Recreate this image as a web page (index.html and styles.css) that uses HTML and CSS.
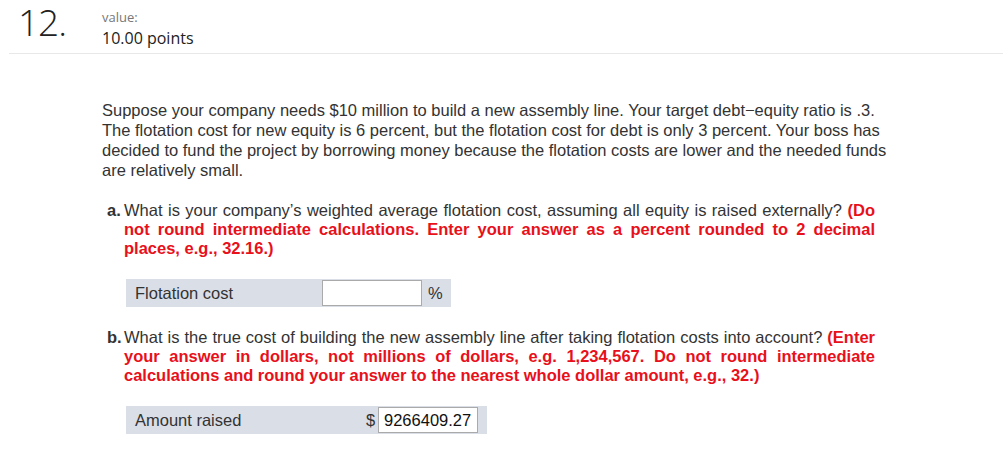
FILE: index.html
```html
<!DOCTYPE html>
<html>
<head>
<meta charset="utf-8">
<link rel="stylesheet" href="styles.css">
</head>
<body>
<div class="header">
  <div class="qnum">12.</div>
  <div class="value">
    <div class="value-label">value:</div>
    <div class="value-points">10.00 points</div>
  </div>
</div>
<div class="content">
  <p class="intro">Suppose your company needs $10 million to build a new assembly line. Your target debt−equity ratio is .3. The flotation cost for new equity is 6 percent, but the flotation cost for debt is only 3 percent. Your boss has decided to fund the project by borrowing money because the flotation costs are lower and the needed funds are relatively small.</p>

  <div class="part part-a">
    <div class="part-label">a.</div>
    <div class="part-text">What is your company’s weighted average flotation cost, assuming all equity is raised externally? <span class="red">(Do not round intermediate calculations. Enter your answer as a percent rounded to 2 decimal places, e.g., 32.16.)</span></div>
  </div>
  <div class="answer answer-a">
    <div class="answer-label">Flotation cost</div>
    <div class="answer-input"></div>
    <div class="answer-unit">%</div>
  </div>

  <div class="part part-b">
    <div class="part-label">b.</div>
    <div class="part-text">What is the true cost of building the new assembly line after taking flotation costs into account? <span class="red">(Enter your answer in dollars, not millions of dollars, e.g. 1,234,567. Do not round intermediate calculations and round your answer to the nearest whole dollar amount, e.g., 32.)</span></div>
  </div>
  <div class="answer answer-b">
    <div class="answer-label">Amount raised</div>
    <div class="answer-prefix">$</div>
    <div class="answer-input">9266409.27</div>
  </div>
</div>
</body>
</html>
```
FILE: styles.css
```css
html, body {
  margin: 0;
  padding: 0;
  background: #ffffff;
}
body {
  font-family: "Liberation Sans", Arial, sans-serif;
  color: #333333;
  width: 1004px;
  height: 468px;
  overflow: hidden;
}
.header {
  display: flex;
  margin-left: 9px;
  margin-right: 1px;
  padding-left: 9px;
  height: 54px;
  border-bottom: 1px solid #e8e8e8;
  box-sizing: border-box;
}
.qnum {
  font-family: "Open Sans", sans-serif;
  font-weight: 300;
  font-size: 37px;
  color: #222;
  line-height: 44px;
  width: 84px;
  letter-spacing: -1px;
  flex: none;
  overflow: visible;
}
.value {
  padding-top: 10px;
  font-family: "Open Sans", sans-serif;
}
.value-label {
  font-size: 13px;
  color: #777;
  line-height: 15px;
}
.value-points {
  font-size: 16px;
  color: #222;
  line-height: 20px;
  margin-top: 3px;
}
.content {
  padding-left: 102px;
}
.intro {
  margin: 46px 0 0 0;
  width: 792px;
  font-size: 16.5px;
  line-height: 20px;
}
.part {
  display: flex;
  margin-left: 5px;
  width: 768px;
  font-size: 16.5px;
  line-height: 19px;
}
.part-a {
  margin-top: 21px;
}
.part-b {
  margin-top: 21px;
}
.part-label {
  width: 17px;
  flex: none;
  font-weight: bold;
}
.part-text {
  text-align: justify;
}
.red {
  color: #e8101a;
  font-weight: bold;
}
.answer {
  display: flex;
  align-items: center;
  margin-left: 24px;
  margin-top: 21px;
  height: 28px;
  background: #dadee7;
  font-size: 16.5px;
}
.answer-a {
  width: 325px;
}
.answer-b {
  width: 361px;
}
.answer-label {
  padding-left: 9px;
  flex: none;
}
.answer-a .answer-label {
  width: 187px;
}
.answer-b .answer-label {
  width: 231px;
}
.answer-input {
  width: 100px;
  height: 26px;
  box-sizing: border-box;
  border: 1px solid #aaaaaa;
  background: #fff;
  line-height: 24px;
  padding-left: 5px;
  color: #111;
  font-size: 16.5px;
}
.answer-unit {
  padding-left: 6px;
}
.answer-prefix {
  width: 12px;
}
```
